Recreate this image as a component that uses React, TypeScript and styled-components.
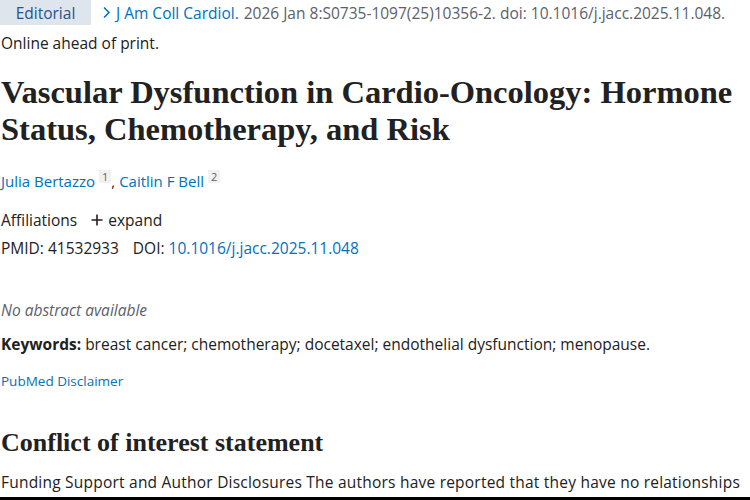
import styled, { createGlobalStyle } from "styled-components";

const GlobalStyle = createGlobalStyle`
  html, body {
    margin: 0;
    padding: 0;
    background: #fff;
  }
  body {
    font-family: "Open Sans", "Noto Sans", sans-serif;
    color: #212121;
    overflow: hidden;
  }
`;

const Page = styled.div`
  width: 750px;
  height: 500px;
  overflow: hidden;
  display: flex;
  flex-direction: column;
`;

const Article = styled.main`
  flex: 1;
  overflow: hidden;
  padding-left: 1px;
`;

const CitationRow = styled.div`
  display: flex;
  align-items: center;
  height: 25px;
  white-space: nowrap;
  font-size: 15.5px;
  margin-left: -1px;
`;

const TypeBadge = styled.span`
  display: inline-flex;
  align-items: center;
  justify-content: center;
  height: 25px;
  width: 91px;
  background: #dfe5ed;
  color: #205493;
  font-size: 15.5px;
`;

const JournalLink = styled.a`
  color: #0071bc;
  text-decoration: none;
  margin-left: 11px;
  display: inline-flex;
  align-items: center;
  gap: 5px;
`;

const Muted = styled.span`
  color: #5b616b;
  margin-left: 5px;
`;

const Note = styled.div`
  font-size: 15.5px;
  line-height: 20px;
  margin-top: 8px;
`;

const Title = styled.h1`
  font-family: "Liberation Serif", "DejaVu Serif", serif;
  font-weight: 700;
  font-size: 32.5px;
  line-height: 37px;
  margin: 21px 0 0;
  color: #212121;
`;

const Authors = styled.div`
  margin-top: 22px;
  font-size: 15px;
  line-height: 20px;
`;

const AuthorLink = styled.a`
  color: #0071bc;
  text-decoration: none;
`;

const Sup = styled.sup`
  display: inline-block;
  font-size: 11px;
  line-height: 13px;
  padding: 0 3px;
  margin-left: 4px;
  background: #f1f1f1;
  color: #5b616b;
  vertical-align: 6px;
`;

const MetaRow = styled.div<{ $gap?: number }>`
  font-size: 15.5px;
  line-height: 20px;
  margin-top: ${(p) => p.$gap ?? 0}px;
  display: flex;
  align-items: center;
  gap: 14px;
`;

const Expand = styled.span`
  display: inline-flex;
  align-items: center;
  gap: 5px;
`;

const Link = styled.a`
  color: #0071bc;
  text-decoration: none;
`;

const NoAbstract = styled.div`
  margin-top: 42px;
  font-style: italic;
  color: #5b616b;
  font-size: 15.5px;
  line-height: 20px;
`;

const Keywords = styled.div`
  margin-top: 14px;
  font-size: 15.5px;
  line-height: 20px;
  white-space: nowrap;
  b {
    font-weight: 700;
  }
`;

const Disclaimer = styled.a`
  display: block;
  margin-top: 18px;
  font-size: 13.5px;
  line-height: 18px;
  color: #0071bc;
  text-decoration: none;
`;

const SectionTitle = styled.h2`
  font-family: "Liberation Serif", "DejaVu Serif", serif;
  font-weight: 700;
  font-size: 26px;
  line-height: 30px;
  margin: 38px 0 0;
  color: #212121;
`;

const Body = styled.p`
  margin: 13px 0 0;
  font-size: 15.5px;
  line-height: 22px;
  letter-spacing: 0.22px;
  white-space: nowrap;
`;

const BottomBar = styled.div`
  height: 3px;
  background: #000;
  flex-shrink: 0;
`;

function Chevron() {
  return (
    <svg width="9" height="13" viewBox="0 0 9 13" fill="none">
      <path d="M2 1.5 L7 6.5 L2 11.5" stroke="#0071bc" strokeWidth="1.6" />
    </svg>
  );
}

function Plus() {
  return (
    <svg width="12" height="12" viewBox="0 0 12 12">
      <path d="M6 0.5 V11.5 M0.5 6 H11.5" stroke="#212121" strokeWidth="1.6" />
    </svg>
  );
}

export default function App() {
  return (
    <Page>
      <GlobalStyle />
      <Article>
        <CitationRow>
          <TypeBadge>Editorial</TypeBadge>
          <JournalLink href="#">
            <Chevron />
            J Am Coll Cardiol.
          </JournalLink>
          <Muted>2026 Jan 8:S0735-1097(25)10356-2. doi: 10.1016/j.jacc.2025.11.048.</Muted>
        </CitationRow>
        <Note>Online ahead of print.</Note>

        <Title>
          Vascular Dysfunction in Cardio-Oncology: Hormone
          <br />
          Status, Chemotherapy, and Risk
        </Title>

        <Authors>
          <AuthorLink href="#">Julia Bertazzo</AuthorLink>
          <Sup>1</Sup>, <AuthorLink href="#">Caitlin F Bell</AuthorLink>
          <Sup>2</Sup>
        </Authors>

        <MetaRow $gap={19}>
          <span>Affiliations</span>
          <Expand>
            <Plus />
            expand
          </Expand>
        </MetaRow>
        <MetaRow $gap={8}>
          <span>PMID: 41532933</span>
          <span>
            DOI: <Link href="#">10.1016/j.jacc.2025.11.048</Link>
          </span>
        </MetaRow>

        <NoAbstract>No abstract available</NoAbstract>

        <Keywords>
          <b>Keywords:</b> breast cancer; chemotherapy; docetaxel; endothelial dysfunction; menopause.
        </Keywords>

        <Disclaimer href="#">PubMed Disclaimer</Disclaimer>

        <SectionTitle>Conflict of interest statement</SectionTitle>
        <Body>
          Funding Support and Author Disclosures The authors have reported that they have no relationships
        </Body>
      </Article>
      <BottomBar />
    </Page>
  );
}
